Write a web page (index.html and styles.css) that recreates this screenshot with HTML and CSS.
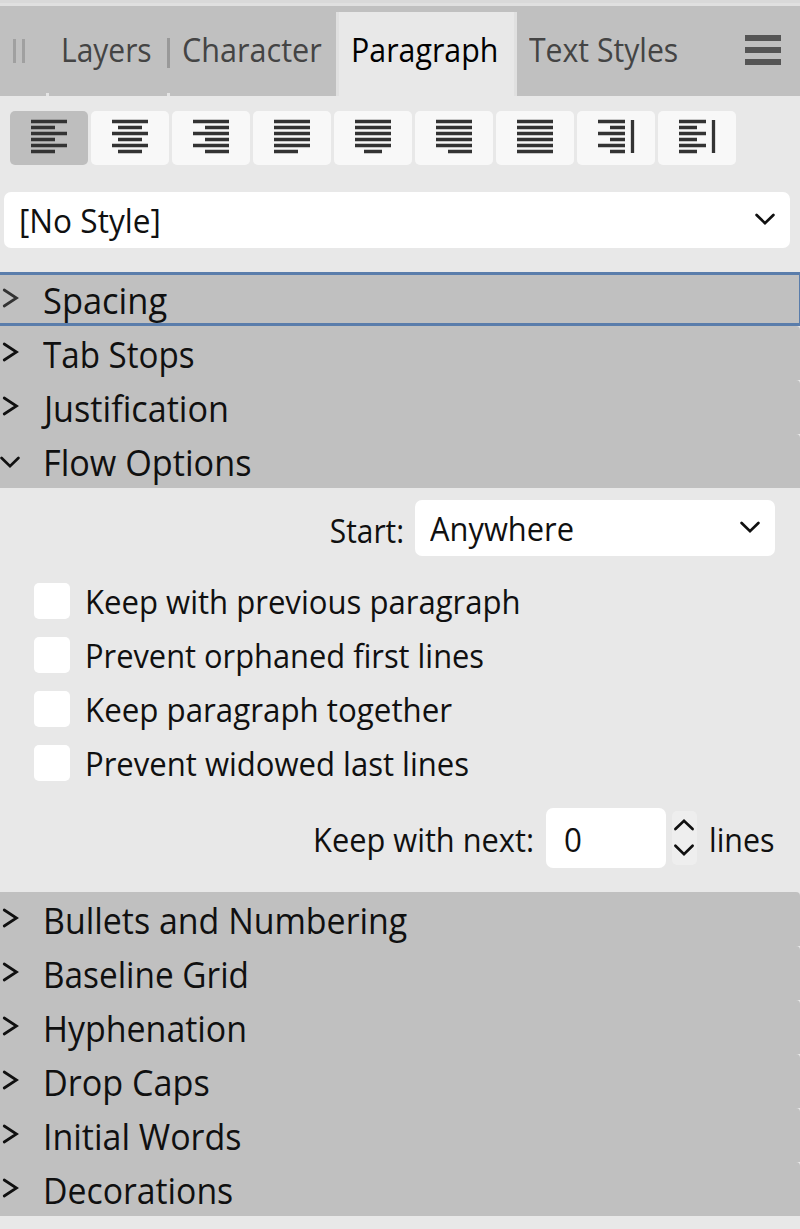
FILE: index.html
```
<!DOCTYPE html>
<html lang="en">
<head>
<meta charset="utf-8">
<title>Paragraph</title>
<link rel="stylesheet" href="styles.css">
</head>
<body>
<svg width="0" height="0" class="defs">
  <symbol id="right" viewBox="0 0 20 24"><path d="M4.2 4 16.5 12 4.2 20"/></symbol>
  <symbol id="down" viewBox="0 0 20 14"><path d="M1.6 3 10 11.2 18.4 3"/></symbol>
</svg>
<main class="panel">
  <div class="strip"></div>
  <nav class="tabs">
    <span class="grip"></span>
    <span class="tab layers"><span class="t t-layers">Layers</span></span>
    <span class="tab character"><span class="t t-char">Character</span></span>
    <span class="tab active"><span class="t t-para">Paragraph</span></span>
    <span class="tab styles"><span class="t t-styles">Text Styles</span></span>
    <svg class="menu" width="38" height="32" viewBox="0 0 38 32"><path d="M1 4H37M1 16H37M1 28H37"/></svg>
  </nav>
  <div class="aligns">
    <button class="align on"><svg viewBox="0 0 78 54"><path d="M21 10.5h36M21 16.5h24M21 22.5h36M21 28.5h24M21 34.5h36M21 40.5h24"/></svg></button>
    <button class="align"><svg viewBox="0 0 78 54"><path d="M21 10.5h36M27 16.5h24M21 22.5h36M27 28.5h24M21 34.5h36M27 40.5h24"/></svg></button>
    <button class="align"><svg viewBox="0 0 78 54"><path d="M21 10.5h36M33 16.5h24M21 22.5h36M33 28.5h24M21 34.5h36M33 40.5h24"/></svg></button>
    <button class="align"><svg viewBox="0 0 78 54"><path d="M21 10.5h36M21 16.5h36M21 22.5h36M21 28.5h36M21 34.5h36M21 40.5h24"/></svg></button>
    <button class="align"><svg viewBox="0 0 78 54"><path d="M21 10.5h36M21 16.5h36M21 22.5h36M21 28.5h36M21 34.5h36M30 40.5h18"/></svg></button>
    <button class="align"><svg viewBox="0 0 78 54"><path d="M21 10.5h36M21 16.5h36M21 22.5h36M21 28.5h36M21 34.5h36M33 40.5h24"/></svg></button>
    <button class="align"><svg viewBox="0 0 78 54"><path d="M21 10.5h36M21 16.5h36M21 22.5h36M21 28.5h36M21 34.5h36M21 40.5h36"/></svg></button>
    <button class="align"><svg viewBox="0 0 78 54"><path d="M21 10.5h27M33 16.5h15M21 22.5h27M33 28.5h15M21 34.5h27M33 40.5h15M55.5 9v33"/></svg></button>
    <button class="align"><svg viewBox="0 0 78 54"><path d="M21 10.5h27M21 16.5h18M21 22.5h27M21 28.5h18M21 34.5h27M21 40.5h18M55.5 9v33"/></svg></button>
  </div>
  <div class="select style-select"><span class="t t-nostyle">[No Style]</span><svg class="chev" width="20" height="14"><use href="#down"/></svg></div>
  <section class="group">
    <div class="head focus"><svg class="chev" width="20" height="24"><use href="#right"/></svg><span class="t t-spacing">Spacing</span></div>
    <div class="head"><svg class="chev" width="20" height="24"><use href="#right"/></svg><span class="t t-tabs">Tab Stops</span></div>
    <div class="head"><svg class="chev" width="20" height="24"><use href="#right"/></svg><span class="t t-just">Justification</span></div>
    <div class="head open"><svg class="chev" width="20" height="14"><use href="#down"/></svg><span class="t t-flow">Flow Options</span></div>
  </section>
  <section class="flow">
    <div class="start"><span class="t t-start">Start:</span><div class="select start-select"><span class="t t-any">Anywhere</span><svg class="chev" width="20" height="14"><use href="#down"/></svg></div></div>
    <div class="checks">
      <label class="check"><i class="box"></i><span class="t t-c1">Keep with previous paragraph</span></label>
      <label class="check"><i class="box"></i><span class="t t-c2">Prevent orphaned first lines</span></label>
      <label class="check"><i class="box"></i><span class="t t-c3">Keep paragraph together</span></label>
      <label class="check"><i class="box"></i><span class="t t-c4">Prevent widowed last lines</span></label>
    </div>
    <div class="next"><span class="t t-next">Keep with next:</span><div class="num"><span class="t t-zero">0</span></div>
      <svg class="spin chev" width="25" height="54" viewBox="0 0 25 54"><path d="M3.4 18 12 9.8 20.6 18M3.4 34.8 12 43.2 20.6 34.8"/></svg>
      <span class="t t-lines">lines</span></div>
  </section>
  <section class="group">
    <div class="head"><svg class="chev" width="20" height="24"><use href="#right"/></svg><span class="t t-bul">Bullets and Numbering</span></div>
    <div class="head"><svg class="chev" width="20" height="24"><use href="#right"/></svg><span class="t t-base">Baseline Grid</span></div>
    <div class="head"><svg class="chev" width="20" height="24"><use href="#right"/></svg><span class="t t-hyph">Hyphenation</span></div>
    <div class="head"><svg class="chev" width="20" height="24"><use href="#right"/></svg><span class="t t-drop">Drop Caps</span></div>
    <div class="head"><svg class="chev" width="20" height="24"><use href="#right"/></svg><span class="t t-init">Initial Words</span></div>
    <div class="head"><svg class="chev" width="20" height="24"><use href="#right"/></svg><span class="t t-deco">Decorations</span></div>
  </section>
</main>
</body>
</html>
```
FILE: styles.css
```
* { box-sizing: border-box; }
body { margin: 0; background: #e8e8e8; color: #101010; font: 33px/54px "Open Sans", "Noto Sans", sans-serif; white-space: nowrap; }
.defs { position: absolute; }
.panel { width: 800px; height: 1229px; overflow: hidden; }
.strip { height: 6px; background: #d9d9d9; border-bottom: 3px solid #e0e0e0; }
.chev { fill: none; stroke: #101010; stroke-width: 2.7; stroke-linecap: round; flex: none; }

/* Condensed label widths */
.t { display: inline-block; transform-origin: 0 50%; }
.t-layers { transform: scaleX(.908); }
.t-char { transform: scaleX(.927); }
.t-para { transform: scaleX(.92); }
.t-styles { transform: scaleX(.914); }
.t-nostyle { transform: scaleX(.957); }
.t-spacing { transform: scaleX(.957); }
.t-tabs { transform: scaleX(.921); }
.t-just { transform: scaleX(.949); padding-left: 1px; }
.t-flow { transform: scaleX(.95); }
.t-start { transform: scaleX(.905); transform-origin: 100% 50%; }
.t-any { transform: scaleX(.935); }
.t-c1 { transform: scaleX(.942); }
.t-c2 { transform: scaleX(.934); }
.t-c3 { transform: scaleX(.948); }
.t-c4 { transform: scaleX(.941); }
.t-next { transform: scaleX(.932); transform-origin: 100% 50%; }
.t-zero { transform: scaleX(.95); }
.t-lines { transform: scaleX(.92); width: 66px; }
.t-bul { transform: scaleX(.942); }
.t-base { transform: scaleX(.926); }
.t-hyph { transform: scaleX(.942); }
.t-drop { transform: scaleX(.949); }
.t-init { transform: scaleX(.943); }
.t-deco { transform: scaleX(.938); }

.tabs { display: flex; height: 90px; background: #c0c0c0; color: #444; align-items: flex-end; }
.grip { width: 12px; height: 24px; margin: 0 21px 33px 13px; border: solid #a0a0a0; border-width: 0 3px; }
.tab { height: 84px; line-height: 76px; }
.layers, .character { background: linear-gradient(#999, #999) 0 26px / 3px 30px no-repeat, linear-gradient(#e4e4e4, #e4e4e4) 0 100% / 3px 3px no-repeat; }
.layers { width: 121px; padding-left: 15px; background-size: 0 0, 3px 3px; }
.character { width: 169px; padding-left: 15px; }
.active { width: 181px; padding-left: 12px; background: #e8e8e8; border: solid #e0e0e0; border-width: 0 3px; color: #000; }
.styles { width: 227px; padding-left: 12px; }
.menu { stroke: #555; stroke-width: 6; margin-bottom: 30px; }

.aligns { display: flex; gap: 3px; padding: 15px 10px 27px; }
.align { width: 78px; height: 54px; padding: 0; border: 0; border-radius: 5px; background: #f8f8f8; }
.align svg { display: block; width: 78px; height: 54px; stroke: #333; stroke-width: 3.3; }
.align.on { background: #bebebe; }

.select { display: flex; justify-content: space-between; align-items: center; height: 56px; background: #fff; border-radius: 7px; line-height: 56px; padding: 0 15px; }
.style-select { margin: 0 10px 24px 4px; }
.select .t { padding-top: 2px; }
.select .chev { margin-bottom: 2px; }

.head { display: flex; height: 54px; background: #c0c0c0; border-radius: 0 4px 0 0; font-size: 36px; line-height: 57px; }
.head .chev { margin: 14px 23px 0 0; }
.head.open .chev { margin-top: 21px; }
.head.focus { border: solid #5a7dab; border-width: 3px 1px 3px 0; border-radius: 0; }
.head.focus .chev { margin-top: 11px; stroke: #333; }
.head.focus span { margin-top: -3px; }

.flow { height: 404px; padding: 12px 25px 0 34px; }
.start { display: flex; justify-content: flex-end; gap: 11px; line-height: 62px; height: 56px; }
.start-select { width: 360px; line-height: 56px; }
.checks { padding-top: 18px; }
.check { display: flex; height: 54px; line-height: 56px; }
.box { width: 36px; height: 36px; margin: 9px 15px 0 0; background: #fff; border-radius: 5px; }
.next { display: flex; justify-content: flex-end; margin-top: 18px; line-height: 63px; height: 60px; }
.num { width: 120px; height: 60px; margin: 0 6px 0 12px; padding-left: 18px; background: #fff; border-radius: 7px; }
.spin { margin: 3px 12px 0 0; background: #eee; border-radius: 5px; }
```
